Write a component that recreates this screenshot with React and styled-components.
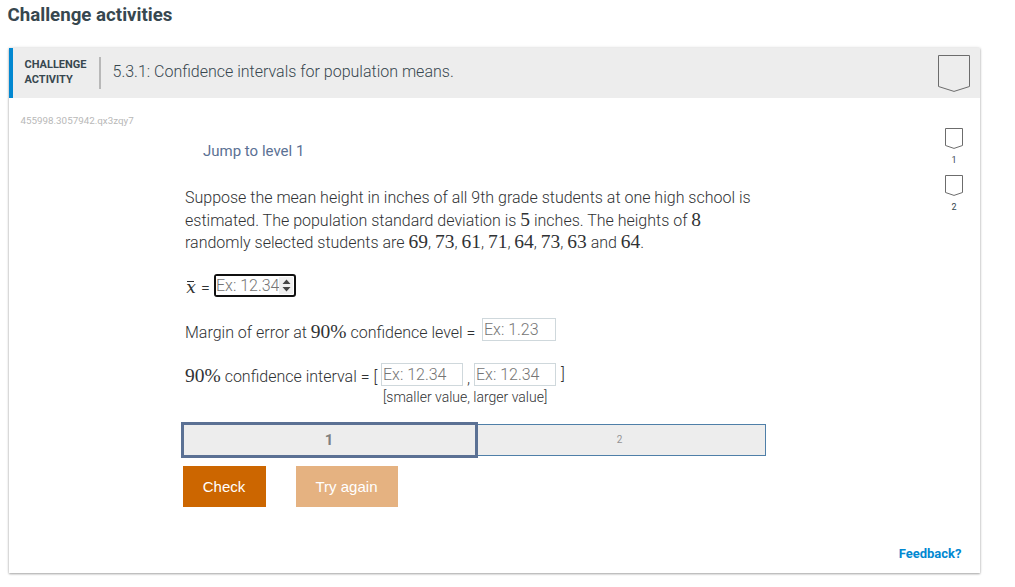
import React from 'react';
import styled, { createGlobalStyle } from 'styled-components';

const App = () => (
  <Page>
    <GlobalStyle />
    <Title>Challenge activities</Title>
    <Card>
      <Header>
        <Kind>CHALLENGE<br />ACTIVITY</Kind>
        <Name>5.3.1: Confidence intervals for population means.</Name>
        <Badge width={32} height={37} />
      </Header>
      <Body>
        <ActivityId>455998.3057942.qx3zqy7</ActivityId>
        <Question>
          <JumpLink>Jump to level 1</JumpLink>
          <Prompt>
            Suppose the mean height in inches of all 9th grade students at one high school is<br />
            estimated. The population standard deviation is <Num>5</Num> inches. The heights of <Num>8</Num><br />
            randomly selected students are <Num>69</Num>, <Num>73</Num>, <Num>61</Num>, <Num>71</Num>, <Num>64</Num>, <Num>73</Num>, <Num>63</Num> and <Num>64</Num>.
          </Prompt>
          <Row $height={44}>
            <Label $width={29}><Mean>𝑥</Mean> =</Label>
            <Focused>
              <Field $bare placeholder="Ex: 12.34" />
              <Spinner />
            </Focused>
          </Row>
          <Row $height={45}>
            <Label $width={297} $drop={4}>Margin of error at <Num>90%</Num> confidence level =</Label>
            <Field $width={74} placeholder="Ex: 1.23" />
          </Row>
          <Row $height={24}>
            <Label $width={196}><Num>90%</Num> confidence interval = [</Label>
            <Field $width={82} placeholder="Ex: 12.34" />
            <Comma>,</Comma>
            <Field $width={82} placeholder="Ex: 12.34" />
            <Bracket>]</Bracket>
          </Row>
          <Hint>[smaller value, larger value]</Hint>
          <Steps>
            <Step $active>1</Step>
            <Step>2</Step>
          </Steps>
          <Buttons>
            <Button $width={83}>Check</Button>
            <Button $width={102} $faded>Try again</Button>
          </Buttons>
        </Question>
        <Levels>
          <Level><Badge width={18} height={21} />1</Level>
          <Level><Badge width={18} height={21} />2</Level>
        </Levels>
      </Body>
      <Feedback>Feedback?</Feedback>
    </Card>
  </Page>
)

const Badge = ({ width, height }) => {
  const side = height - (width > 20 ? 5 : 3) - .5
  return (
    <svg width={width} height={height} fill="none" stroke="#6c6c6c">
      <path d={`M.5 .5H${width - .5}V${side}L${width / 2} ${height - .6}L.5 ${side}Z`} />
    </svg>
  )
}

const Spinner = () => (
  <SpinnerBox>
    <svg width="9" height="13" fill="#454545">
      <path d="M4.5 .5L8.5 5H.5Z M.5 8H8.5L4.5 12.5Z" />
    </svg>
  </SpinnerBox>
)

const GlobalStyle = createGlobalStyle`
  * {
    box-sizing: border-box;
  }

  body {
    margin: 0;
    background: #fff;
    color: #37474f;
    font-family: Roboto, sans-serif;
  }
`

const Page = styled.main`
  height: 587px;
  padding: 4px 0 0 7.5px;
  overflow: hidden;
`

const Title = styled.h1`
  margin: 0 0 22px;
  font-size: 18.7px;
  line-height: 22px;
  font-weight: 700;
`

const Card = styled.section`
  display: flex;
  flex-direction: column;
  width: 971px;
  height: 525px;
  margin-left: 1.5px;
  box-shadow: 0 1px 2px rgba(0, 0, 0, .3), 0 0 3px rgba(0, 0, 0, .16);
`

const Header = styled.header`
  display: flex;
  height: 50px;
  padding: 7px 10px 0 11px;
  border-left: 4px solid #0288d1;
  background: #ededed;
`

const Kind = styled.div`
  width: 77px;
  height: 32px;
  margin-top: 2px;
  padding-left: .5px;
  border-right: 2px solid #b8b8b8;
  font-size: 11px;
  line-height: 15px;
  font-weight: 700;
`

const Name = styled.div`
  flex-grow: 1;
  padding-left: 11.5px;
  font-size: 16px;
  line-height: 34px;
  font-weight: 300;
`

const Body = styled.div`
  display: flex;
  flex-grow: 1;
`

const ActivityId = styled.div`
  width: 172px;
  padding: 17px 0 0 11.5px;
  color: #b8b8b8;
  font-size: 9.8px;
  line-height: 12px;
`

const Question = styled.div`
  flex-grow: 1;
  padding-left: 4px;
  color: #303234;
  font-size: 16px;
  font-weight: 300;
  white-space: nowrap;
`

const JumpLink = styled.div`
  padding: 43px 0 0 18px;
  color: #5b7194;
  font-size: 15px;
  line-height: 20px;
  font-weight: 400;
`

const Prompt = styled.p`
  height: 87px;
  margin: 26px 0 0;
  line-height: 22.5px;
`

const Num = styled.span`
  font-family: "Liberation Serif", serif;
  font-size: 19.5px;
  line-height: 1;
  font-weight: 400;
`

const Row = styled.div`
  display: flex;
  height: ${p => p.$height}px;
`

const Label = styled.div`
  width: ${p => p.$width}px;
  padding-top: ${p => p.$drop || 3}px;
  line-height: 22px;
`

const Mean = styled.span`
  display: inline-block;
  width: 10px;
  height: 13px;
  margin-right: 2px;
  background: linear-gradient(#303234, #303234) 2px 0 / 7px 1px no-repeat;
  font-family: "DejaVu Math TeX Gyre", "DejaVu Serif", serif;
  font-size: 17px;
  font-weight: 400;
  line-height: 15px;
`

const Field = styled.input`
  width: ${p => p.$bare ? 63 : p.$width}px;
  height: ${p => p.$bare ? 19 : 23}px;
  padding: 0 0 1px ${p => p.$bare ? 0 : 1}px;
  border: ${p => p.$bare ? 'none' : '1px solid #cfd8dc'};
  outline: none;
  background: #fff;
  font: 300 16px Roboto, sans-serif;

  &::placeholder {
    color: #757575;
  }
`

const Focused = styled.div`
  display: flex;
  width: 82px;
  height: 23px;
  border: 2px solid #101010;
  border-radius: 3px;
`

const SpinnerBox = styled.span`
  display: flex;
  align-items: center;
  justify-content: center;
  width: 14px;
  margin: 1px 1px 1px 0;
  background: #efefef;
`

const Comma = styled.span`
  width: 11px;
  padding: 6px 0 0 4px;
`

const Bracket = styled.span`
  padding: 1px 0 0 5px;
`

const Hint = styled.div`
  padding-left: 198px;
  font-size: 14px;
  line-height: 20px;
`

const Steps = styled.div`
  display: flex;
  align-items: center;
  margin: 15px 0 0 -4px;
`

const Step = styled.div`
  width: ${p => p.$active ? 297 : 288}px;
  height: ${p => p.$active ? 36 : 32}px;
  padding-right: ${p => p.$active ? 1 : 4}px;
  border: ${p => p.$active ? '3px solid #5b7194' : '1px solid #4f7fa8'};
  border-left-width: ${p => p.$active ? 3 : 0}px;
  background: #ededed;
  color: ${p => p.$active ? '#808080' : '#949494'};
  font-size: ${p => p.$active ? 15 : 10}px;
  font-weight: ${p => p.$active ? 700 : 400};
  line-height: 30px;
  text-align: center;
`

const Buttons = styled.div`
  display: flex;
  gap: 30px;
  margin: 8px 0 0 -2px;
`

const Button = styled.button`
  width: ${p => p.$width}px;
  height: 41px;
  padding: 0 1px 0 0;
  border: none;
  background: ${p => p.$faded ? '#e5b281' : '#cc6600'};
  color: #fff;
  font: 400 15px "Liberation Sans", sans-serif;
`

const Levels = styled.div`
  width: 35px;
  padding-top: 30px;
`

const Level = styled.div`
  display: flex;
  flex-direction: column;
  align-items: center;
  width: 18px;
  height: 47px;
  font-size: 9px;
  font-weight: 400;
  line-height: 22px;
`

const Feedback = styled.div`
  padding: 0 18.5px 10px 0;
  color: #0288d1;
  font-size: 13px;
  line-height: 18px;
  font-weight: 700;
  text-align: right;
`

export default App
